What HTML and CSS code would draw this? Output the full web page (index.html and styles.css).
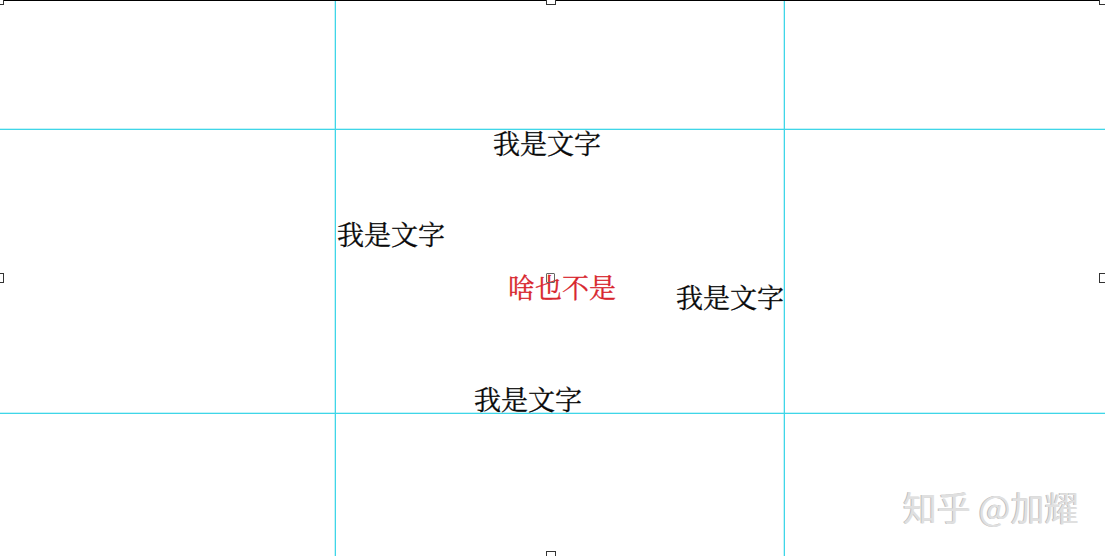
FILE: index.html
```html
<!DOCTYPE html>
<html lang="zh-CN">
<head>
<meta charset="utf-8">
<title>画布</title>
<link rel="stylesheet" href="styles.css">
</head>
<body>
<div class="canvas">
  <div class="guide guide-v guide-v1"></div>
  <div class="guide guide-v guide-v2"></div>
  <div class="guide guide-h guide-h1"></div>
  <div class="guide guide-h guide-h2"></div>

  <div class="label label-top">我是文字</div>
  <div class="label label-left">我是文字</div>
  <div class="label label-center">啥也不是</div>
  <div class="label label-right">我是文字</div>
  <div class="label label-bottom">我是文字</div>

  <div class="selection"></div>
  <div class="handle h-tl"></div>
  <div class="handle h-tm"></div>
  <div class="handle h-tr"></div>
  <div class="handle h-ml"></div>
  <div class="handle h-mr"></div>
  <div class="handle h-bm"></div>
  <div class="pivot"></div>

  <div class="watermark">知乎 @加耀</div>
</div>
</body>
</html>
```
FILE: styles.css
```css
html, body {
  margin: 0;
  padding: 0;
  background: #ffffff;
}

.canvas {
  position: relative;
  width: 1105px;
  height: 556px;
  overflow: hidden;
  background: #ffffff;
  font-family: "Noto Serif CJK SC", "Liberation Serif", "Noto Sans CJK SC", serif;
}

.guide {
  position: absolute;
  background: #3fd6e8;
}
.guide-v {
  top: 0;
  bottom: 0;
  width: 1px;
  box-shadow: -1px 0 0 rgba(63, 214, 232, 0.3);
}
.guide-h {
  left: 0;
  right: 0;
  height: 1px;
  box-shadow: 0 -1px 0 rgba(63, 214, 232, 0.3);
}
.guide-v1 { left: 335px; }
.guide-v2 { left: 784px; }
.guide-h1 { top: 129px; }
.guide-h2 { top: 413px; }

.label {
  position: absolute;
  font-size: 27px;
  line-height: 27px;
  color: #0a0a0a;
  -webkit-text-stroke: 0.3px currentColor;
  white-space: nowrap;
}
.label-top { left: 493px; top: 129px; }
.label-left { left: 337px; top: 220px; }
.label-center { left: 508px; top: 273px; color: #d8262e; }
.label-right { left: 676px; top: 283px; }
.label-bottom { left: 474px; top: 385px; }

.selection {
  position: absolute;
  left: -1px;
  top: 0;
  width: 1105px;
  height: 556px;
  border-top: 1px solid #000000;
  box-sizing: border-box;
}

.handle {
  position: absolute;
  width: 10px;
  height: 10px;
  box-sizing: border-box;
  border: 1px solid #333333;
  background: #ffffff;
}
.h-tl { left: -6px; top: -5px; }
.h-tm { left: 546px; top: -5px; }
.h-tr { left: 1099px; top: -5px; }
.h-ml { left: -6px; top: 273px; }
.h-mr { left: 1099px; top: 273px; }
.h-bm { left: 546px; top: 551px; }

.pivot {
  position: absolute;
  left: 546px;
  top: 273px;
  width: 9px;
  height: 10px;
  box-sizing: border-box;
  border: 1px solid #666666;
  border-radius: 1px;
}

.watermark {
  position: absolute;
  left: 903px;
  top: 486px;
  font-family: "Noto Sans CJK SC", sans-serif;
  font-size: 34px;
  line-height: 42px;
  color: #e0e0e0;
  text-shadow: -1px 0 #bcbcbc;
  white-space: nowrap;
}
```
